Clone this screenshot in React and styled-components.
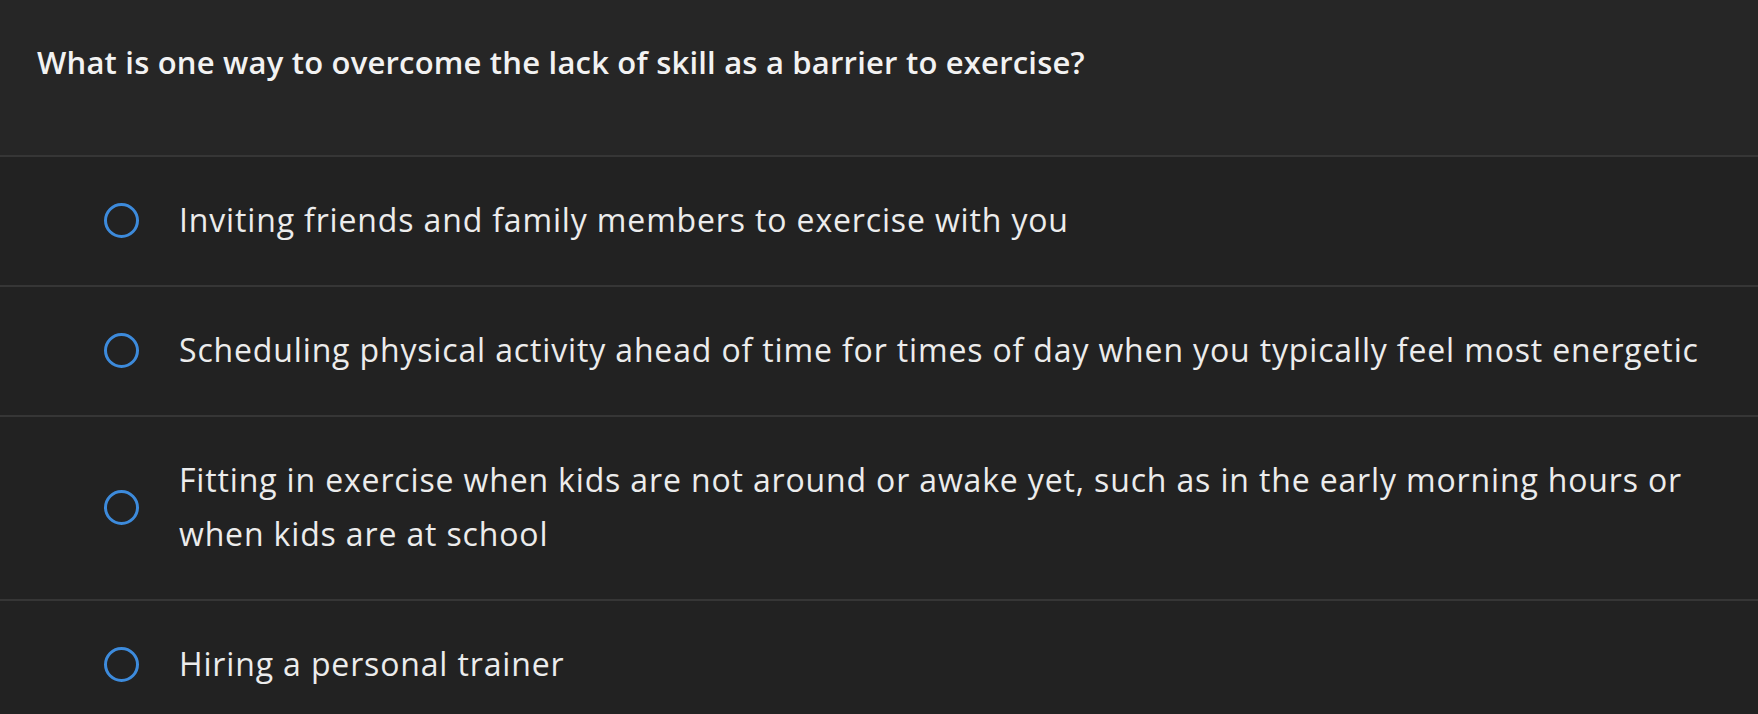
import React from "react";
import styled, { createGlobalStyle } from "styled-components";

const GlobalStyle = createGlobalStyle`
  html, body {
    margin: 0;
    padding: 0;
    background: #222222;
  }
  body {
    font-family: "Open Sans", "Liberation Sans", sans-serif;
    -webkit-font-smoothing: antialiased;
  }
`;

const Quiz = styled.div`
  width: 100%;
  background: #222222;
  color: #ededed;
`;

const Question = styled.header`
  background: #262626;
  height: 157px;
  box-sizing: border-box;
  padding: 40px 37px 0;
  border-bottom: 2px solid #363636;

  h2 {
    margin: 0;
    font-size: 31px;
    line-height: 44px;
    font-weight: 600;
    letter-spacing: 0.2px;
    color: #f2f2f2;
  }
`;

const Options = styled.ul`
  list-style: none;
  margin: 0;
  padding: 0;
`;

const Option = styled.li`
  display: flex;
  align-items: center;
  gap: 40px;
  padding: 36px 40px 38px 104px;
  border-bottom: 2px solid #363636;
  cursor: pointer;

  &:last-child {
    border-bottom: none;
  }
`;

const Radio = styled.span`
  flex: none;
  width: 35px;
  height: 35px;
  box-sizing: border-box;
  border-radius: 50%;
  border: 3px solid #3d8bdc;
`;

const Label = styled.span`
  font-size: 32px;
  line-height: 54px;
  font-weight: 400;
  letter-spacing: 0.85px;
  color: #ececec;
`;

const answers = [
  "Inviting friends and family members to exercise with you",
  "Scheduling physical activity ahead of time for times of day when you typically feel most energetic",
  "Fitting in exercise when kids are not around or awake yet, such as in the early morning hours or when kids are at school",
  "Hiring a personal trainer",
];

export default function App() {
  return (
    <Quiz>
      <GlobalStyle />
      <Question>
        <h2>What is one way to overcome the lack of skill as a barrier to exercise?</h2>
      </Question>
      <Options>
        {answers.map((a) => (
          <Option key={a}>
            <Radio />
            <Label>{a}</Label>
          </Option>
        ))}
      </Options>
    </Quiz>
  );
}
